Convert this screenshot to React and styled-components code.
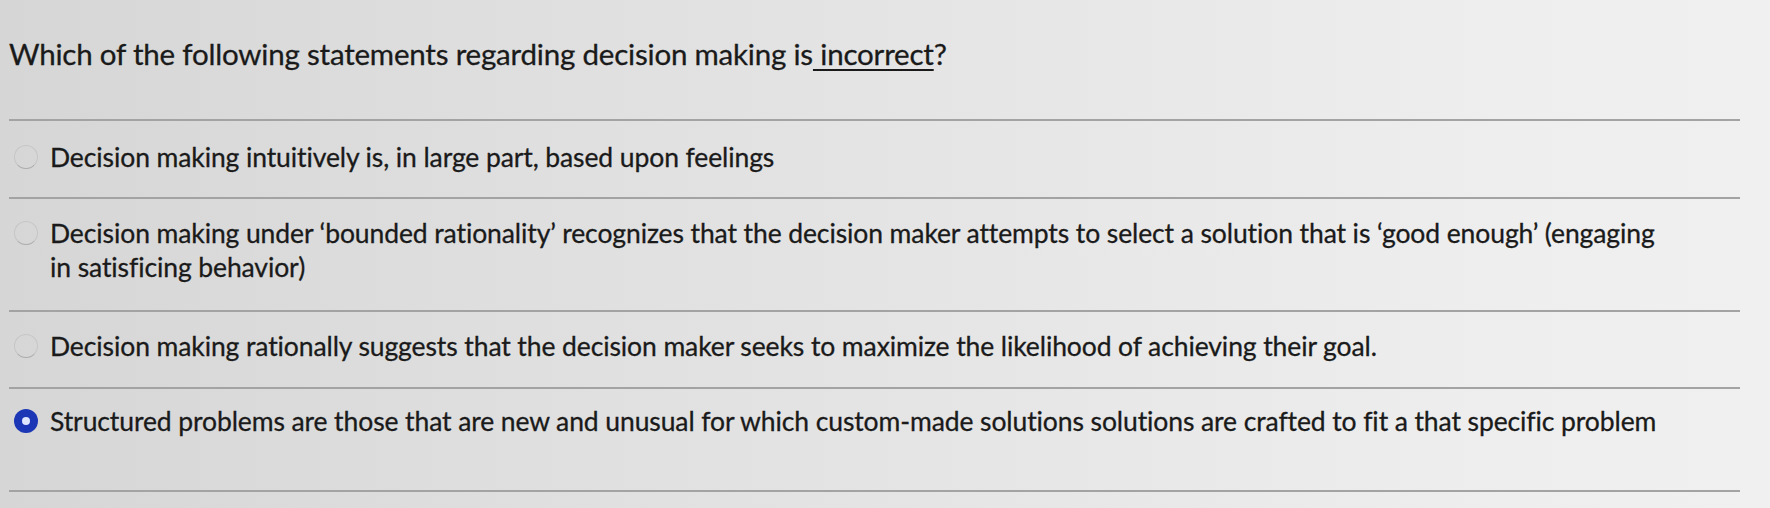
import React from "react";
import styled, { createGlobalStyle } from "styled-components";

const Global = createGlobalStyle`
  html, body { margin: 0; padding: 0; }
  body {
    width: 1770px;
    height: 508px;
    overflow: hidden;
    background: linear-gradient(90deg, #d6d6d6 0%, #dfdfdf 30%, #e7e7e7 60%, #eeeeee 85%, #f0f0f0 100%);
    font-family: Lato, "Open Sans", sans-serif;
    color: #1a1a1a;
  }
`;

const Page = styled.div`
  display: flex;
  flex-direction: column;
  padding: 36px 30px 0 9px;
`;

const Question = styled.div`
  font-size: 29.5px;
  line-height: 36px;
  margin-bottom: 47px;
  letter-spacing: -0.2px;
  -webkit-text-stroke: 0.3px #1a1a1a;
`;

const Emph = styled.span`
  text-decoration: underline;
  text-decoration-thickness: 2px;
  text-underline-offset: 4px;
`;

const Options = styled.div`
  display: flex;
  flex-direction: column;
`;

const Row = styled.label`
  display: flex;
  align-items: flex-start;
  gap: 12px;
  border-top: 2px solid #a3a3a3;
  padding: ${(p) => p.$pad};
`;

const Radio = styled.span`
  flex: none;
  width: 24px;
  height: 24px;
  margin: 5px 0 0 5px;
  border-radius: 50%;
  box-sizing: border-box;
  display: flex;
  align-items: center;
  justify-content: center;
  border: ${(p) => (p.$checked ? "none" : "1.5px solid rgba(0,0,0,0.08)")};
  border-bottom-color: ${(p) => (p.$checked ? "transparent" : "rgba(0,0,0,0.2)")};
  background: ${(p) => (p.$checked ? "#1c37b5" : "transparent")};
`;

const Dot = styled.span`
  width: 8px;
  height: 8px;
  border-radius: 50%;
  background: #dfe6ff;
`;

const Text = styled.span`
  font-size: 26.5px;
  line-height: 34px;
  max-width: 1630px;
  letter-spacing: -0.1px;
  -webkit-text-stroke: 0.3px #1a1a1a;
`;

const options = [
  { text: "Decision making intuitively is, in large part, based upon feelings", pad: "19px 0 23px" },
  {
    text:
      "Decision making under \u2018bounded rationality\u2019 recognizes that the decision maker attempts to select a solution that is \u2018good enough\u2019 (engaging in satisficing behavior)",
    pad: "17px 0 26px",
  },
  {
    text: "Decision making rationally suggests that the decision maker seeks to maximize the likelihood of achieving their goal.",
    pad: "17px 0 24px",
  },
  {
    text:
      "Structured problems are those that are new and unusual for which custom-made solutions solutions are crafted to fit a that specific problem",
    pad: "15px 0 52px",
    checked: true,
  },
];

export default function App() {
  return (
    <>
      <Global />
      <Page>
        <Question>
          Which of the following statements regarding decision making is<Emph> incorrect</Emph>?
        </Question>
        <Options>
          {options.map((o, i) => (
            <Row key={i} $pad={o.pad}>
              <Radio $checked={o.checked}>{o.checked && <Dot />}</Radio>
              <Text>{o.text}</Text>
            </Row>
          ))}
          <Row $pad="0" />
        </Options>
      </Page>
    </>
  );
}
